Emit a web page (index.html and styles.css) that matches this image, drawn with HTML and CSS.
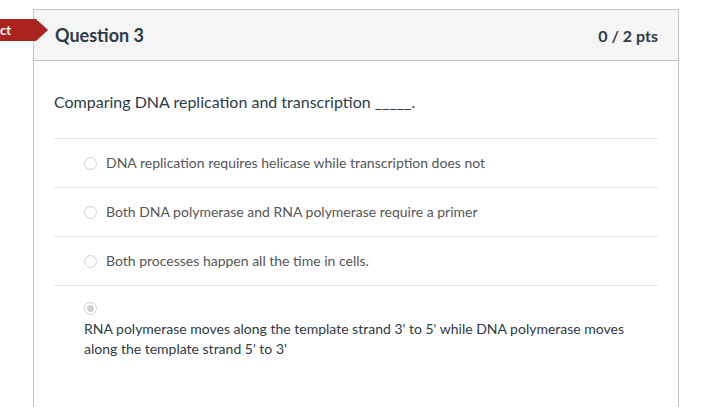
FILE: index.html
```html
<!DOCTYPE html>
<html>
<head>
<meta charset="utf-8">
<link rel="stylesheet" href="styles.css">
</head>
<body>
<div class="page">
  <div class="question">
    <div class="flag">Incorrect</div>
    <div class="header">
      <span class="title">Question 3</span>
      <span class="pts">0 / 2 pts</span>
    </div>
    <div class="content">
      <div class="qtext">Comparing DNA replication and transcription _____.</div>
      <div class="answers">
        <div class="answer">
          <span class="radio"></span>
          <span class="label">DNA replication requires helicase while transcription does not</span>
        </div>
        <div class="answer">
          <span class="radio"></span>
          <span class="label">Both DNA polymerase and RNA polymerase require a primer</span>
        </div>
        <div class="answer">
          <span class="radio"></span>
          <span class="label">Both processes happen all the time in cells.</span>
        </div>
        <div class="answer selected">
          <span class="radio checked"></span>
          <span class="label">RNA polymerase moves along the template strand 3' to 5' while DNA polymerase moves along the template strand 5' to 3'</span>
        </div>
      </div>
    </div>
  </div>
</div>
</body>
</html>
```
FILE: styles.css
```css
html, body {
  margin: 0;
  padding: 0;
  background: #fff;
  overflow: hidden;
  font-family: Lato, "Open Sans", sans-serif;
  color: #2d3b45;
}
.page {
  padding: 9px 0 0 33px;
}
.question {
  position: relative;
  width: 644px;
  border: 1px solid #c4c4c4;
  border-bottom: none;
  min-height: 397px;
}
.flag {
  position: absolute;
  left: -106px;
  top: 9px;
  height: 22px;
  width: 120px;
  padding-right: 37px;
  box-sizing: border-box;
  text-align: right;
  white-space: nowrap;
  background: #ab231f;
  color: #fff;
  font-size: 13px;
  font-weight: 700;
  line-height: 22px;
  clip-path: polygon(0 0, 108px 0, 120px 11px, 108px 22px, 0 22px);
}
.header {
  height: 50px;
  background: #f5f5f5;
  border-bottom: 1px solid #c4c4c4;
  display: flex;
  align-items: center;
  justify-content: space-between;
  padding: 0 20px 0 21px;
}
.title {
  font-size: 18px;
  font-weight: 700;
  color: #2d3b45;
}
.pts {
  font-size: 16px;
  font-weight: 700;
  color: #2d3b45;
}
.content {
  padding: 29px 20px 0 20px;
}
.qtext {
  font-size: 16px;
  line-height: 24px;
  margin-bottom: 24px;
}
.answer {
  border-top: 1px solid #e6e6e6;
  display: flex;
  align-items: center;
  padding: 14px 0 14px 30px;
  font-size: 14px;
  line-height: 20px;
  color: #555;
}
.radio {
  width: 11px;
  height: 11px;
  border: 1px solid #d2d2d2;
  border-radius: 50%;
  background: #fff;
  margin-right: 9px;
  flex: none;
  box-sizing: content-box;
}
.answer.selected {
  flex-direction: column;
  align-items: flex-start;
  padding-top: 16px;
  color: #2d3b45;
}
.answer.selected .label {
  margin-top: 4px;
}
.radio.checked {
  position: relative;
}
.radio.checked::after {
  content: "";
  position: absolute;
  left: 2px;
  top: 2px;
  width: 7px;
  height: 7px;
  border-radius: 50%;
  background: #cfcfcf;
}
```
